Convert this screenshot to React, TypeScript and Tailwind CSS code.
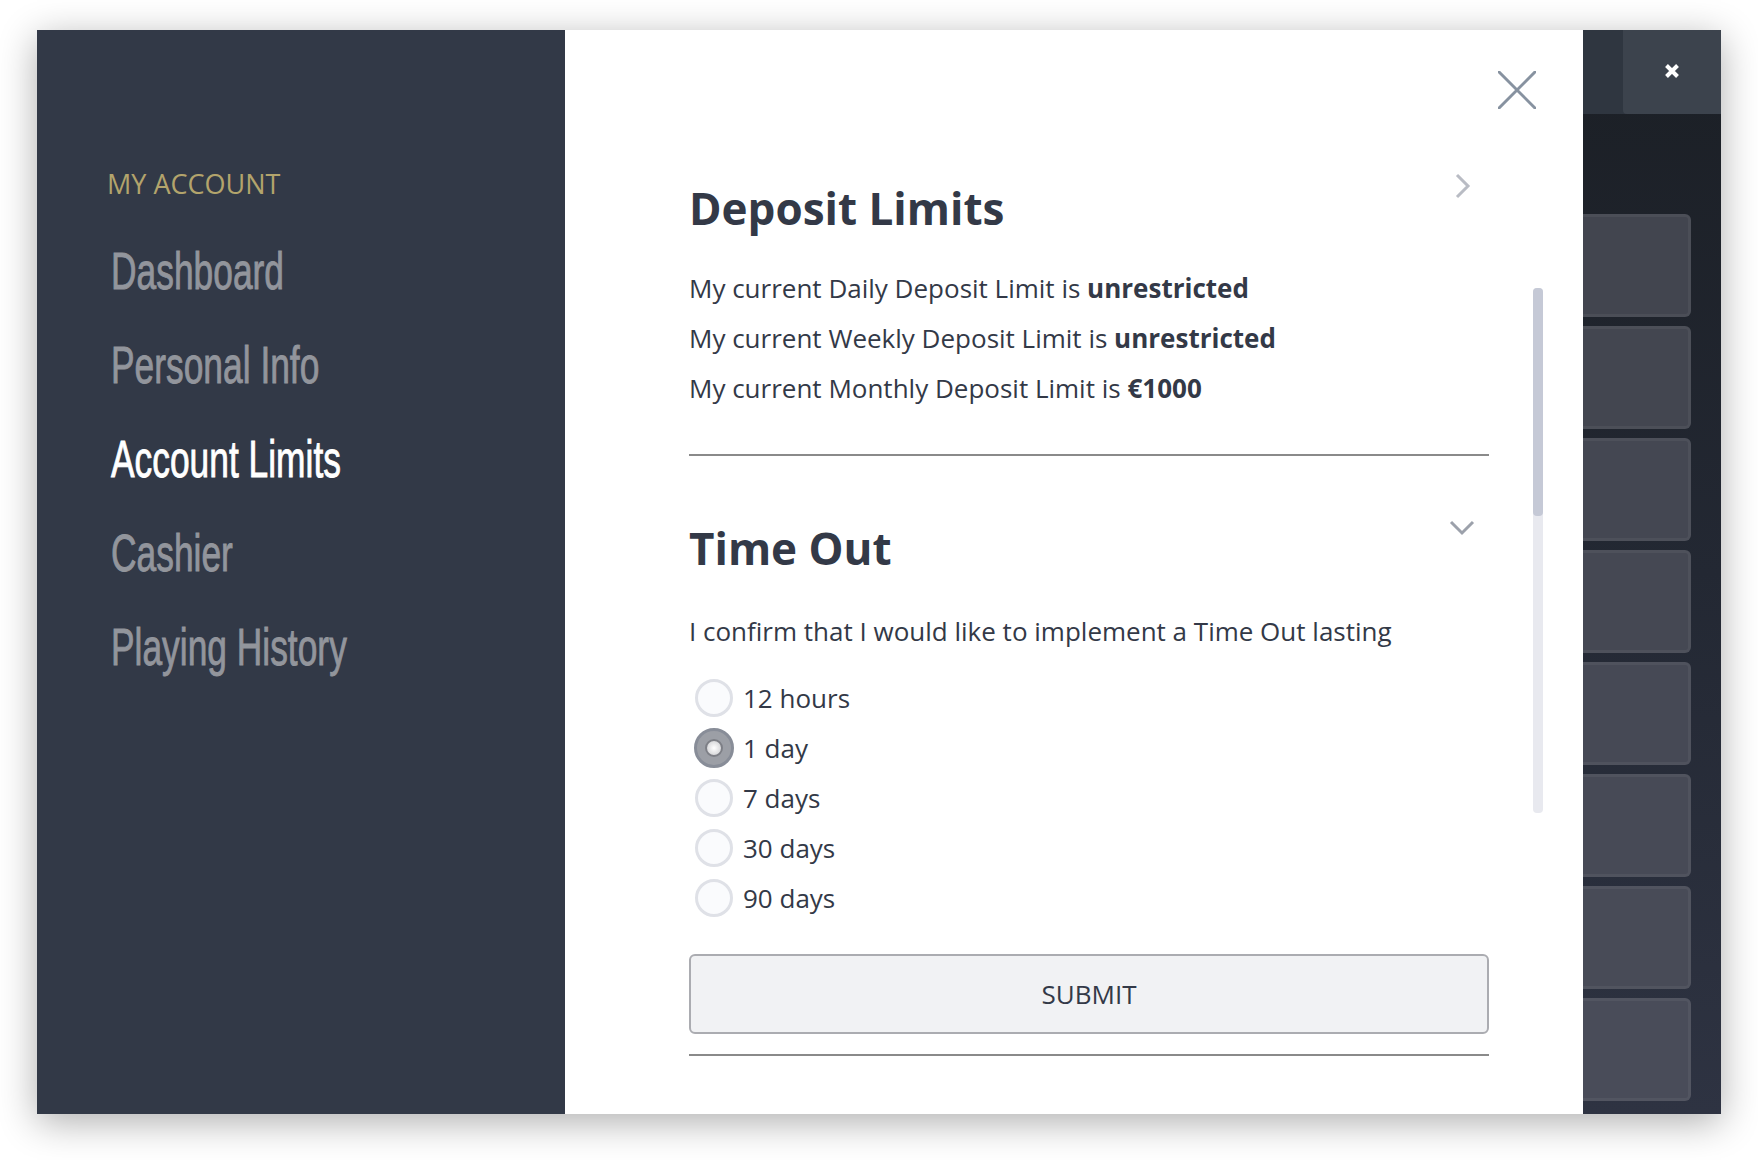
import React from "react";

const nav = ["Dashboard", "Personal Info", "Account Limits", "Cashier", "Playing History"];
const limits: [string, string][] = [
  ["Daily", "unrestricted"],
  ["Weekly", "unrestricted"],
  ["Monthly", "€1000"],
];
const options = ["12 hours", "1 day", "7 days", "30 days", "90 days"];
const tiles = [0, 1, 2, 3, 4, 5, 6, 7];

export default function App() {
  return (
    <div className="w-[1758px] h-[1160px] bg-white overflow-hidden pt-[30px] pl-[37px] font-['Open_Sans',sans-serif]">
      <div className="flex w-[1684px] h-[1084px] shadow-[0_8px_36px_rgba(0,0,0,0.32)]">
        <aside className="w-[528px] shrink-0 bg-[#323947] pt-[137px] pl-[70px]">
          <div className="text-[27px] leading-[34px] text-[#b3a46c]">MY ACCOUNT</div>
          <nav className="mt-[23px] flex flex-col pl-[4px]">
            {nav.map((n) => (
              <div
                key={n}
                className={`h-[94px] flex items-center text-[52px] [-webkit-text-stroke:0.9px_currentColor] origin-left scale-x-[0.68] font-['Liberation_Sans',sans-serif] ${
                  n === "Account Limits" ? "text-white" : "text-[#92959c]"
                }`}
              >
                {n}
              </div>
            ))}
          </nav>
        </aside>

        <main className="relative w-[1018px] shrink-0 bg-white pl-[124px] text-[#333947]">
          <svg className="absolute left-[933px] top-[41px] w-[38px] h-[38px]" viewBox="0 0 38 38" fill="none" stroke="#8792a0" strokeWidth="3" strokeLinecap="round">
            <path d="M1 1L37 37M37 1L1 37" />
          </svg>
          <div className="absolute left-[968px] top-[258px] w-[10px] h-[525px] rounded bg-[#e8e9ef]">
            <div className="w-[10px] h-[228px] rounded bg-[#c5c9d6]" />
          </div>

          <div className="w-[800px]">
            <div className="relative pt-[148px] border-b-2 border-[#8a8a8a] pb-[41px]">
              <svg className="absolute left-[766px] top-[143px] w-[16px] h-[26px]" viewBox="0 0 16 26" fill="none" stroke="#b9bcc4" strokeWidth="3">
                <path d="M2 2L13 13L2 24" />
              </svg>
              <h2 className="text-[44px] leading-[60px] font-bold">Deposit Limits</h2>
              <div className="mt-[25px] text-[26px] leading-[50px]">
                {limits.map(([p, v]) => (
                  <p key={p}>
                    My current {p} Deposit Limit is <b>{v}</b>
                  </p>
                ))}
              </div>
            </div>

            <div className="relative pt-[62px]">
              <svg className="absolute left-[760px] top-[64px] w-[26px] h-[16px]" viewBox="0 0 26 16" fill="none" stroke="#9ca1ab" strokeWidth="3">
                <path d="M2 2L13 13L24 2" />
              </svg>
              <h2 className="text-[44px] leading-[60px] font-bold">Time Out</h2>
              <p className="mt-[28px] text-[26px] leading-[50px]">I confirm that I would like to implement a Time Out lasting</p>
              <div className="mt-[17px] flex flex-col pl-[6px]">
                {options.map((o) => (
                  <label key={o} className="h-[50px] flex items-center gap-[10px] text-[26px]">
                    {o === "1 day" ? (
                      <span className="-mx-[1px] w-[40px] h-[40px] rounded-full bg-[#9c9fa6] border-[3px] border-[#888d98] flex items-center justify-center">
                        <span className="w-[18px] h-[18px] rounded-full border-2 border-[#7d7f86] bg-[radial-gradient(circle,#ffffff,#c9cacd)]" />
                      </span>
                    ) : (
                      <span className="w-[38px] h-[38px] rounded-full border-[3px] border-[#dfe1e7] bg-[#fafbfd]" />
                    )}
                    <span>{o}</span>
                  </label>
                ))}
              </div>
              <button className="mt-[31px] w-full h-[80px] rounded-md border-2 border-[#abacb1] bg-[#f1f2f4] text-[26px] text-[#333947]">SUBMIT</button>
              <div className="mt-[20px] border-b-2 border-[#8a8a8a]" />
            </div>
          </div>
        </main>

        <section className="w-[138px] shrink-0 overflow-hidden bg-[linear-gradient(180deg,#1b1f25_0%,#232833_50%,#2e3342_100%)]">
          <div className="h-[84px] bg-[#2f3640] flex justify-end">
            <div className="w-[98px] h-full rounded-bl bg-[#3c434d] flex items-center justify-center pb-[2px]">
              <svg className="w-[14px] h-[14px]" viewBox="0 0 14 14" stroke="#ffffff" strokeWidth="4">
                <path d="M1.5 1.5L12.5 12.5M12.5 1.5L1.5 12.5" />
              </svg>
            </div>
          </div>
          <div className="-ml-[12px] mr-[30px] mt-[100px] flex flex-col gap-[9px]">
            {tiles.map((t) => (
              <div
                key={t}
                className="h-[103px] rounded-md border-[3px] border-[#ffffff0d]"
                style={{ backgroundColor: `rgb(${66 + t}, ${69 + t}, ${79 + t * 1.4})` }}
              />
            ))}
          </div>
        </section>
      </div>
    </div>
  );
}
